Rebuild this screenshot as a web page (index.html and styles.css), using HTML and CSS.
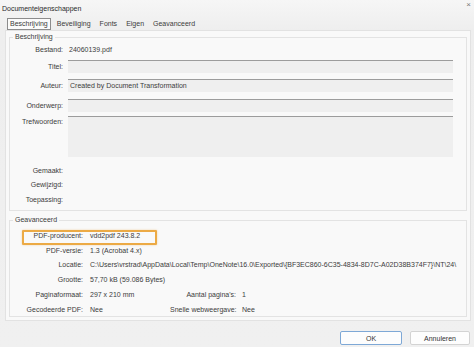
FILE: index.html
```html
<!DOCTYPE html>
<html lang="nl">
<head>
  <meta charset="UTF-8" />
  <meta name="viewport" content="width=device-width, initial-scale=1.0">
  <title>Documenteigenschappen</title>
  <link rel="stylesheet" href="styles.css">
</head>
<body>
  <div class="dialog">
    <div class="titlebar">
      <span>Documenteigenschappen</span>
      <span class="close">&times;</span>
    </div>

    <div class="tabs">
      <span class="tab active">Beschrijving</span>
      <span class="tab">Beveiliging</span>
      <span class="tab">Fonts</span>
      <span class="tab">Eigen</span>
      <span class="tab">Geavanceerd</span>
    </div>

    <div class="panel">
      <fieldset class="group desc">
        <legend>Beschrijving</legend>
        <div class="row r-text"><label>Bestand:</label><span class="val">24060139.pdf</span></div>
        <div class="row r-input"><label>Titel:</label><div class="field"></div></div>
        <div class="row r-input"><label>Auteur:</label><div class="field">Created by Document Transformation</div></div>
        <div class="row r-input"><label>Onderwerp:</label><div class="field"></div></div>
        <div class="row r-area"><label>Trefwoorden:</label><div class="field area"></div></div>
        <div class="row r-text"><label>Gemaakt:</label><span class="val"></span></div>
        <div class="row r-text"><label>Gewijzigd:</label><span class="val"></span></div>
        <div class="row r-text"><label>Toepassing:</label><span class="val"></span></div>
      </fieldset>

      <fieldset class="group adv">
        <legend>Geavanceerd</legend>
        <div class="highlight"></div>
        <div class="arow"><label>PDF-producent:</label><span class="val wide">vdd2pdf 243.8.2</span></div>
        <div class="arow"><label>PDF-versie:</label><span class="val wide">1.3 (Acrobat 4.x)</span></div>
        <div class="arow"><label>Locatie:</label><span class="val wide">C:\Users\vrstrad\AppData\Local\Temp\OneNote\16.0\Exported\{BF3EC860-6C35-4834-8D7C-A02D38B374F7}\NT\24\</span></div>
        <div class="arow"><label>Grootte:</label><span class="val wide">57,70 kB (59.086 Bytes)</span></div>
        <div class="arow"><label>Paginaformaat:</label><span class="val">297 x 210 mm</span><label>Aantal pagina's:</label><span class="val last">1</span></div>
        <div class="arow"><label>Gecodeerde PDF:</label><span class="val">Nee</span><label>Snelle webweergave:</label><span class="val last">Nee</span></div>
      </fieldset>
    </div>

    <div class="buttons">
      <button class="btn default">OK</button>
      <button class="btn">Annuleren</button>
    </div>
  </div>
</body>
</html>
```

FILE: styles.css
```css
* {
  box-sizing: border-box;
}
body {
  margin: 0;
  font-family: "Liberation Sans", Arial, sans-serif;
  font-size: 7px;
  color: #3c3c3c;
  background: #f1f1f1;
}
.dialog {
  width: 474px;
  height: 347px;
  background: linear-gradient(#f6f6f6, #eeeeee 30px, #f0f0f0);
}
.titlebar {
  height: 17px;
  line-height: 17px;
  padding: 0 3px 0 2px;
  display: flex;
  justify-content: space-between;
  color: #2a2a2a;
}
.close {
  font-size: 8px;
  line-height: 10px;
  color: #777;
}
.tabs {
  height: 13px;
  display: flex;
  align-items: center;
  gap: 3px;
  padding-left: 7px;
}
.tab {
  line-height: 10px;
  padding: 0 2px;
  border: 1px solid transparent;
}
.tab.active {
  border-color: #8c8c8c;
  background: #fbfbfb;
}
.panel {
  margin-left: 5px;
  width: 466px;
  height: 291px;
  border: 1px solid #e2e2e2;
  background: #f9f9f9;
  padding: 2px 3px 0 3px;
}
.group {
  margin: 0;
  padding: 0;
  min-width: 0;
  border: 1px solid #e3e3e3;
  position: relative;
}
.group legend {
  margin-left: 3px;
  padding: 0 2px;
  line-height: 8px;
}
.desc {
  height: 178px;
  padding-top: 1px;
}
.row {
  display: grid;
  grid-template-columns: 53px 1fr;
  align-items: center;
}
.row label {
  text-align: right;
}
.val {
  padding-left: 6px;
}
.r-text {
  height: 14.5px;
}
.r-input {
  height: 19.5px;
}
.r-area {
  height: 48px;
  align-items: start;
}
.r-area label {
  padding-top: 3px;
}
.field {
  margin: 0 13px 0 5px;
  height: 13px;
  line-height: 12px;
  padding-left: 2px;
  background: #efefef;
  border-top: 1px solid #9c9c9c;
}
.field.area {
  height: 41px;
  margin-top: 1px;
}
.adv {
  margin-top: 5px;
  height: 101px;
  padding-top: 4px;
}
.arow {
  display: grid;
  grid-template-columns: 73px 87px 66px 1fr;
  height: 14.8px;
  align-items: center;
  white-space: nowrap;
}
.arow label {
  text-align: right;
}
.arow .val {
  padding-left: 7px;
}
.arow .wide {
  grid-column: 2 / 5;
}
.arow .last {
  padding-left: 6px;
}
.highlight {
  position: absolute;
  left: 12px;
  top: 6px;
  width: 135px;
  height: 15px;
  border: 2px solid #ecaa45;
  border-radius: 1px;
  box-shadow: 0 0 2px rgba(236, 170, 69, 0.5);
}
.buttons {
  display: flex;
  justify-content: flex-end;
  gap: 8px;
  padding: 10px 4px 0 0;
}
.btn {
  width: 62px;
  height: 14px;
  padding: 0;
  font-family: inherit;
  font-size: 7px;
  color: #333;
  background: #fdfdfd;
  border: 1px solid #d3d3d3;
  border-radius: 2px;
}
.btn.default {
  border-color: #7ea8d6;
}
.btn + .btn {
  width: 60px;
}
```
